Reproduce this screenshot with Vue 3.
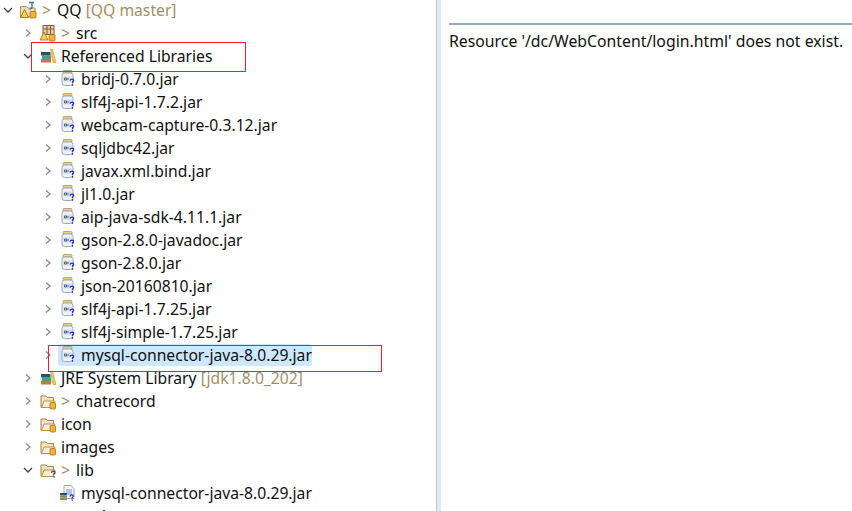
<script setup>
const jars = [
  'bridj-0.7.0.jar',
  'slf4j-api-1.7.2.jar',
  'webcam-capture-0.3.12.jar',
  'sqljdbc42.jar',
  'javax.xml.bind.jar',
  'jl1.0.jar',
  'aip-java-sdk-4.11.1.jar',
  'gson-2.8.0-javadoc.jar',
  'gson-2.8.0.jar',
  'json-20160810.jar',
  'slf4j-api-1.7.25.jar',
  'slf4j-simple-1.7.25.jar',
  'mysql-connector-java-8.0.29.jar'
]
const rows = [
  { level: 0, chev: 'down', icon: 'project', dec: true, text: 'QQ', tail: ' [QQ master]' },
  { level: 1, chev: 'right', icon: 'pkg', dec: true, text: 'src' },
  { level: 1, chev: 'down', icon: 'lib', text: 'Referenced Libraries' },
  ...jars.map((text, i) => ({ level: 2, chev: 'right', icon: 'jar', text, selected: i === jars.length - 1 })),
  { level: 1, chev: 'right', icon: 'lib', text: 'JRE System Library', tail: ' [jdk1.8.0_202]' },
  { level: 1, chev: 'right', icon: 'folder', dec: true, text: 'chatrecord' },
  { level: 1, chev: 'right', icon: 'folder', text: 'icon' },
  { level: 1, chev: 'right', icon: 'folder', text: 'images' },
  { level: 1, chev: 'down', icon: 'folderq', dec: true, text: 'lib' },
  { level: 2, chev: 'none', icon: 'file', text: 'mysql-connector-java-8.0.29.jar' }
]
</script>

<template>
  <div class="app">
    <section class="tree">
      <div v-for="(r, i) in rows" :key="i" class="row" :class="'lv' + r.level">
        <svg class="chev" width="10" height="10" viewBox="0 0 10 10">
          <path v-if="r.chev === 'right'" d="M3 1.500 L7 5 L3 8.500" fill="none" stroke="#8a8a8a" stroke-width="1.300" />
          <path v-else-if="r.chev === 'down'" d="M1 3 L5 7 L9 3" fill="none" stroke="#444" stroke-width="1.300" />
        </svg>
        <div class="item" :class="{ selected: r.selected }">
          <svg class="icon" width="18" height="18" viewBox="0 0 18 18">
            <g v-if="r.icon === 'project'">
              <path d="M1.500 5.500 h6 l1.500 1.500 h7 v9 h-14.500 z" fill="#f3dcae" stroke="#b59258" />
              <path d="M13 1 v5 q0 2 -2.500 2 M10 1.500 h5" fill="none" stroke="#3d6fc0" stroke-width="1.300" />
              <path d="M5.500 8.500 L9.500 16.500 H1.500 Z" fill="#f6d44c" stroke="#8a6a1e" stroke-width=".8" />
              <rect x="11" y="10.500" width="6" height="6.500" rx="1" fill="#f2b233" stroke="#a8701a" stroke-width=".8" />
            </g>
            <g v-else-if="r.icon === 'pkg'">
              <rect x="5" y="1.500" width="11" height="9" fill="#e8cfa8" stroke="#8c5a3a" />
              <path d="M9 1.500 v9 M12.500 1.500 v9 M5 5 h11" stroke="#8c5a3a" />
              <path d="M6 8 L10 16 H2 Z" fill="#f6d44c" stroke="#8a6a1e" stroke-width=".8" />
              <rect x="11" y="10.500" width="6" height="6.500" rx="1" fill="#f2b233" stroke="#a8701a" stroke-width=".8" />
            </g>
            <g v-else-if="r.icon === 'lib'">
              <rect x="3" y="12" width="10" height="3.500" fill="#d0713a" />
              <rect x="4" y="8.500" width="9" height="3.500" fill="#4f9c7a" />
              <rect x="3" y="5" width="9.500" height="3.500" fill="#2f4f70" />
              <path d="M12.500 2.500 L14.500 2 L18 15.500 L15 15.500 Z" fill="#f2c765" stroke="#c89530" stroke-width=".6" />
            </g>
            <g v-else-if="r.icon === 'jar'">
              <rect x="5" y="0.500" width="9" height="2.500" rx="1" fill="#e9d48f" stroke="#a89258" stroke-width=".8" />
              <rect x="4" y="3" width="11" height="12.500" rx="2.500" fill="#eef2f8" stroke="#9aa8bc" />
              <rect x="5.500" y="6.500" width="8" height="5" fill="#d2dcea" />
              <path d="M6.500 8 h2 v2 h-2 z M10 8 v2" fill="none" stroke="#4a5a78" stroke-width=".9" />
              <path d="M12 10.500 q.8 -1.800 3 -1.200 q1.500 1 -.5 2.700 v1 M14.500 14 v1.800" fill="none" stroke="#2a2ad0" stroke-width="1.300" />
            </g>
            <g v-else-if="r.icon === 'folder' || r.icon === 'folderq'">
              <path d="M3 4 h5 l1.500 1.500 h6 v10 h-12.500 z" fill="#f5e2bd" stroke="#a98450" />
              <path d="M3.500 15.500 L6 9 h11 L15 15.500 z" fill="#fbefd6" stroke="#b8925a" />
              <rect v-if="r.icon === 'folder'" x="12" y="10.500" width="5.500" height="6.500" rx="1" fill="#f2b233" stroke="#a8701a" stroke-width=".8" />
              <path v-else d="M13.500 12 q.5 -2.500 3 -1.700 q1.500 1 -.5 2.700 v.8 M16 15 v1.500" fill="none" stroke="#2a2ad0" stroke-width="1.200" />
            </g>
            <g v-else-if="r.icon === 'file'">
              <path d="M6 1.500 h7 l3 3 v10 h-10 z" fill="#f4f6fa" stroke="#9aa4b4" />
              <path d="M8 6 h6 M8 8 h6 M8 10 h6" stroke="#6d90c8" />
              <rect x="2" y="9" width="7" height="2.200" fill="#2f4f70" />
              <rect x="2" y="11.300" width="7" height="2.200" fill="#4f9c7a" />
              <rect x="2" y="13.600" width="7" height="2.400" fill="#d0713a" />
              <path d="M12 12.500 q.5 -2 2.700 -1.400 q1.500 1 -.5 2.500 v.8 M14.200 15.200 v1.500" fill="none" stroke="#2a2ad0" stroke-width="1.200" />
            </g>
          </svg>
          <span class="label"><span v-if="r.dec" class="dec pre">&gt; </span>{{ r.text }}<span v-if="r.tail" class="dec">{{ r.tail }}</span></span>
        </div>
      </div>
      <div class="mark mark-a"></div>
      <div class="mark mark-b"></div>
      <div class="cut"></div>
    </section>
    <div class="sash"></div>
    <section class="browser">
      <div class="rule"></div>
      <p class="msg">Resource '/dc/WebContent/login.html' does not exist.</p>
    </section>
  </div>
</template>

<style>
html, body { margin: 0; background: #fff; overflow: hidden; }
</style>

<style scoped>
.app {
  display: flex;
  width: 852px;
  height: 511px;
  overflow: hidden;
  font-family: "Noto Sans", "Noto Sans CJK SC", sans-serif;
  font-size: 15.7px;
  color: #111;
  background: #fff;
}
.tree {
  position: relative;
  width: 436px;
  height: 511px;
  overflow: hidden;
  flex: none;
}
.row {
  display: flex;
  align-items: center;
  height: 23px;
}
.row:first-child { margin-top: -2px; }
.lv0 { padding-left: 3px; }
.lv1 { padding-left: 23px; }
.lv2 { padding-left: 43px; }
.chev { flex: none; width: 10px; margin-right: 5px; }
.lv0 .chev { margin-right: 6px; }
.item {
  display: flex;
  align-items: center;
  height: 22px;
  white-space: nowrap;
}
.item.selected { background: #cce8ff; border-radius: 2px; }
.icon { flex: none; margin-right: 5px; }
.label { line-height: 22px; }
.dec { color: #a5905f; white-space: pre; }
.pre { margin-right: 2px; }
.mark { position: absolute; box-sizing: border-box; border: 1px solid #e8222e; pointer-events: none; }
.mark-a { left: 31px; top: 42px; width: 215px; height: 30px; }
.mark-b { left: 48px; top: 345px; width: 334px; height: 27px; }
.cut { position: absolute; left: 103px; top: 510px; width: 2px; height: 1px; background: #333; }
.sash {
  flex: none;
  width: 5px;
  height: 511px;
  box-sizing: border-box;
  border-left: 1px solid #c4c4c4;
  background: #e1e7f6;
}
.browser {
  flex: 1;
  padding: 23px 0 0 8px;
}
.rule { height: 2px; background: #94a8cc; }
.msg { margin: 0; padding-top: 5px; font-size: 15.8px; line-height: 22px; white-space: nowrap; }
</style>
